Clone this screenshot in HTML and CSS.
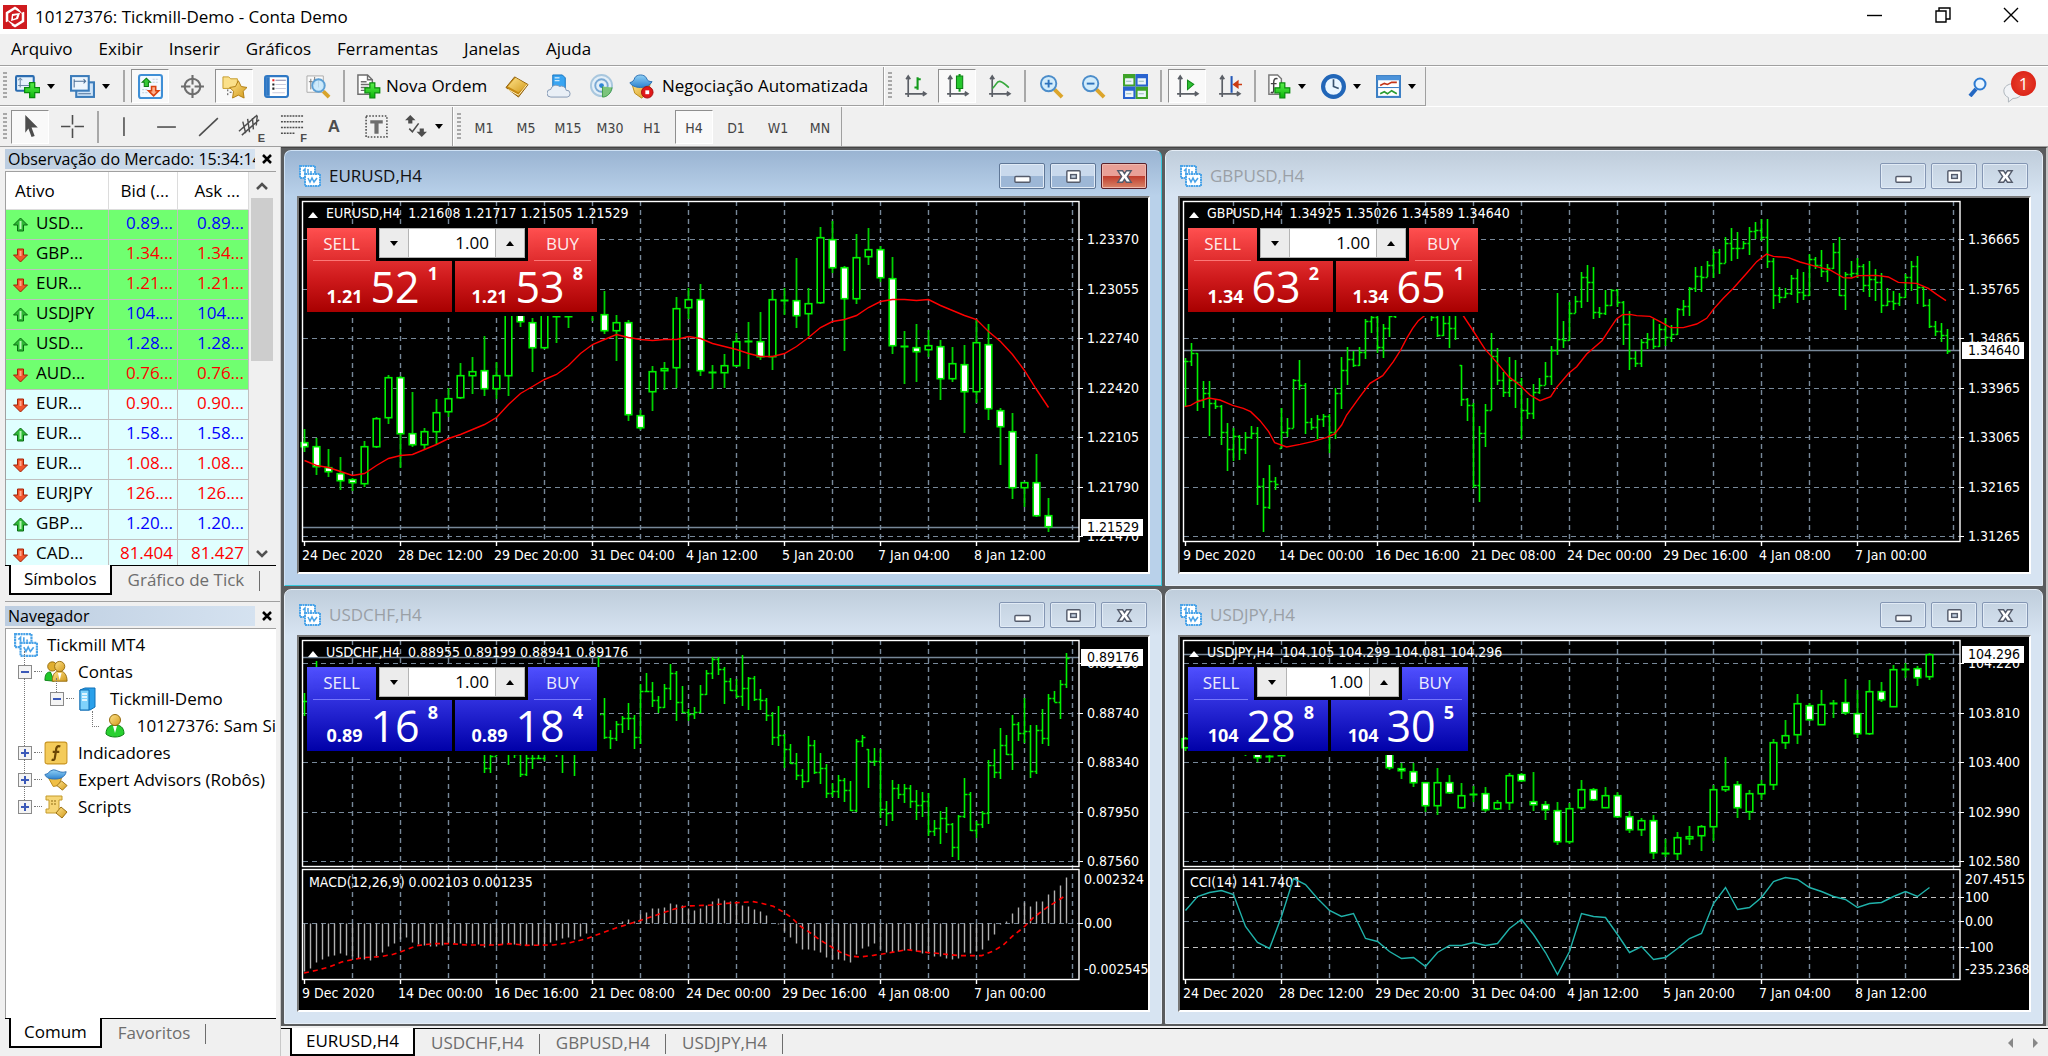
FILE: index.html
```html
<!DOCTYPE html>
<html lang="pt">
<head>
<meta charset="utf-8">
<meta name="viewport" content="width=device-width, initial-scale=1">
<title>10127376: Tickmill-Demo - Conta Demo</title>
<link rel="stylesheet" href="styles.css">
</head>
<body>
<svg class="sprite" aria-hidden="true">
  <defs>
    <linearGradient id="gold" x1="0" y1="0" x2="1" y2="1"><stop offset="0" stop-color="#ffe38a"/><stop offset="1" stop-color="#d29a1c"/></linearGradient>
    <linearGradient id="blue" x1="0" y1="0" x2="0" y2="1"><stop offset="0" stop-color="#8fd0f5"/><stop offset="1" stop-color="#2f83cf"/></linearGradient>
    <linearGradient id="plusg" x1="0" y1="0" x2="0" y2="1"><stop offset="0" stop-color="#5cf04c"/><stop offset="1" stop-color="#0cb40c"/></linearGradient>
  </defs>
  <symbol id="plus" viewBox="0 0 14 14"><path d="M5 1h4v4h4v4H9v4H5V9H1V5h4z" fill="url(#plusg)" stroke="#078a0b"/></symbol>
  <symbol id="i-newchart" viewBox="0 0 24 24"><rect x="1" y="2" width="17" height="14" rx="1" fill="#e6f2fc" stroke="#2b6cb0" stroke-width="2"/><path d="M5 5v8M3 11h12M13 9l2 2-2 2M3 6l2-2 2 2" stroke="#6b88a8" fill="none"/><use href="#plus" x="8" y="7" width="17" height="17"/></symbol>
  <symbol id="i-profiles" viewBox="0 0 24 24"><rect x="6" y="8" width="17" height="14" fill="#cfe4f8" stroke="#3c7cba" stroke-width="2"/><rect x="1" y="2" width="17" height="14" fill="#eef6fd" stroke="#3c7cba" stroke-width="2"/><path d="M4 5v8M4 7h11M13 5l2 2-2 2M8 19h12" stroke="#4d6f96" fill="none"/></symbol>
  <symbol id="i-market" viewBox="0 0 24 24"><rect x="1" y="1" width="22" height="22" rx="2" fill="#f4faff" stroke="#3f8fd6" stroke-width="2"/><path d="M14 5h6M14 8h6M4 15h6M4 18h6" stroke="#c2cfdb" stroke-dasharray="2 1"/><path d="M8 4l4 4h-2v4H6V8H4z" fill="#35c935" stroke="#0d7d14"/><path d="M15 21l-5-5h3v-4h4v4h3z" fill="#ffb08c" stroke="#d9420f" stroke-width="1.500"/></symbol>
  <symbol id="i-data" viewBox="0 0 24 24"><circle cx="12" cy="12" r="7.500" fill="none" stroke="#6d6d6d" stroke-width="2"/><path d="M12 1v9M12 14v9M1 12h9M14 12h9" stroke="#6d6d6d" stroke-width="2"/></symbol>
  <symbol id="i-nav" viewBox="0 0 26 26"><path d="M1 3h6l2 2h7v10H1z" fill="#fbe08a" stroke="#c49a2a"/><path d="M6 16v8M8 19h4" stroke="#444" stroke-dasharray="2 2"/><path d="M17 7l3 6 6 1-4 4 1 7-6-3-6 3 1-7-4-4 6-1z" fill="url(#gold)" stroke="#b07d12"/></symbol>
  <symbol id="i-terminal" viewBox="0 0 24 24"><rect x="1" y="2" width="22" height="20" rx="2" fill="#fff" stroke="#2f78c4" stroke-width="2"/><path d="M2 3h3.500v18H2z" fill="#2f78c4"/><path d="M8 6h2" stroke="#e22" stroke-width="2"/><path d="M11 6h10" stroke="#88a"/><path d="M8 10h2M8 14h2" stroke="#222" stroke-width="2"/><path d="M11 10h10M11 14h10M8 18h12" stroke="#ccd"/></symbol>
  <symbol id="i-tester" viewBox="0 0 26 26"><path d="M1 2h17v17H1z" fill="#fafafa" stroke="#aaa"/><path d="M5 5v11M9 3v8M13 5v9M3 8h4M8 6h4" stroke="#777"/><circle cx="13" cy="12" r="6.500" fill="#c3e6fb" fill-opacity=".85" stroke="#5c9fd4" stroke-width="2"/><path d="M18 18l6 6" stroke="#d8a32a" stroke-width="4"/></symbol>
  <symbol id="i-order" viewBox="0 0 26 26"><path d="M2 1h10l5 5v15H2z" fill="#fff" stroke="#6d6d6d" stroke-width="1.500"/><path d="M12 1v5h5M5 8h6M5 11h9M5 14h8M5 17h4" stroke="#6d6d6d" fill="none" stroke-width="1.500"/><use href="#plus" x="8" y="8" width="18" height="18"/></symbol>
  <symbol id="i-meta" viewBox="0 0 26 26"><path d="M1 14L10 3l14 8-10 13z" fill="#c78a12" stroke="#8d5d08"/><path d="M3 13l8-9 12 7-9 8z" fill="url(#gold)"/><path d="M3 16l11 6 9-11" fill="none" stroke="#fff1c2"/></symbol>
  <symbol id="i-mql" viewBox="0 0 26 26"><path d="M6 1h10l3 3v12H6z" fill="#39a5f2" stroke="#1573be"/><path d="M8 4h5M8 7h5" stroke="#fff"/><path d="M4 24a4 4 0 010-8 5.500 5.500 0 019-3 5 5 0 017 4 3.500 3.500 0 011 7z" fill="#e9eff6" stroke="#8397b3"/></symbol>
  <symbol id="i-signal" viewBox="0 0 26 26"><circle cx="13" cy="12" r="11" fill="#e3eff8" stroke="#a9c7de" stroke-width="2"/><circle cx="13" cy="12" r="6.500" fill="none" stroke="#7aa9d4" stroke-width="2"/><circle cx="13" cy="12" r="2.500" fill="#2f86d6"/><path d="M14 13v11c5 0 9-4 10-10" fill="#7cc47c" stroke="#3f9a48"/></symbol>
  <symbol id="i-robot" viewBox="0 0 26 26"><path d="M3 10h19l-2 10-7 5-7-5z" fill="url(#gold)" stroke="#b88715"/><path d="M1 9c3-1 4-2 5-5 2-4 10-4 12 0 1 3 3 4 6 4-2 4-7 6-12 6S2 12 1 9z" fill="url(#blue)" stroke="#2c70b3"/><circle cx="19" cy="19" r="6" fill="#e01818" stroke="#a80c0c"/><path d="M17 17h4v4h-4z" fill="#fff"/></symbol>
  <symbol id="axes" viewBox="0 0 24 24"><path d="M5 2v20M2 19h20M3 5l2-3 2 3M19 17l3 2-3 2" fill="none" stroke="#5b5f66" stroke-width="1.600"/></symbol>
  <symbol id="i-bars" viewBox="0 0 24 24"><use href="#axes"/><path d="M14 3v12M11 13h3M14 5h3" stroke="#129a1b" stroke-width="2"/></symbol>
  <symbol id="i-candles" viewBox="0 0 24 24"><use href="#axes"/><path d="M14 0v17" stroke="#129a1b" stroke-width="2"/><path d="M11 2h6v12h-6z" fill="#25c72d" stroke="#0c7f14"/></symbol>
  <symbol id="i-line" viewBox="0 0 24 24"><use href="#axes"/><path d="M5 14c4-3 4-7 7-7 3 0 5 3 9 6" fill="none" stroke="#36a83c" stroke-width="1.600"/></symbol>
  <symbol id="i-zoomin" viewBox="0 0 26 26"><path d="M16 16l8 8" stroke="#dca52b" stroke-width="4"/><circle cx="10" cy="10" r="8" fill="#d2ecfb" stroke="#4c8dca" stroke-width="2"/><path d="M10 6v8M6 10h8" stroke="#2e73bd" stroke-width="2"/></symbol>
  <symbol id="i-zoomout" viewBox="0 0 26 26"><path d="M16 16l8 8" stroke="#dca52b" stroke-width="4"/><circle cx="10" cy="10" r="8" fill="#d2ecfb" stroke="#4c8dca" stroke-width="2"/><path d="M6 10h8" stroke="#2e73bd" stroke-width="2"/></symbol>
  <symbol id="i-tile" viewBox="0 0 24 24"><path d="M0 0h12v12H0zM12 12h12v12H12z" fill="#3fa329"/><path d="M12 0h12v12H12zM0 12h12v12H0z" fill="#2963cf"/><path d="M2 4h8v6H2zM14 4h8v6h-8zM2 16h8v6H2zM14 16h8v6h-8z" fill="#eef6fb"/><path d="M3 7h5M15 7h5M3 19h5M15 19h5" stroke="#9bb"/></symbol>
  <symbol id="i-scroll" viewBox="0 0 24 24"><use href="#axes"/><path d="M12 6l6 4-6 5z" fill="#2fc234" stroke="#128a19"/></symbol>
  <symbol id="i-shift" viewBox="0 0 24 24"><use href="#axes"/><path d="M14 2v16" stroke="#2458b8" stroke-width="2"/><path d="M24 10h-6M20 7l-4 3 4 3z" stroke="#cc3b12" stroke-width="1.500" fill="#cc3b12"/></symbol>
  <symbol id="i-indic" viewBox="0 0 26 26"><path d="M3 1h9l4 4v16H3z" fill="#fff" stroke="#777" stroke-width="1.500"/><path d="M12 5c-3-1-4 1-4 4v8c0 2-1 3-3 2M5 10h6" fill="none" stroke="#444" stroke-width="1.500"/><use href="#plus" x="8" y="8" width="18" height="18"/></symbol>
  <symbol id="i-clock" viewBox="0 0 24 24"><circle cx="12" cy="12" r="10" fill="#eaf6ff" stroke="#2166b8" stroke-width="4"/><path d="M12 5v7l5 2" fill="none" stroke="#39536e" stroke-width="1.600"/></symbol>
  <symbol id="i-template" viewBox="0 0 24 24"><rect x="1" y="2" width="22" height="20" fill="#fff" stroke="#3c7fc4" stroke-width="2"/><path d="M1 2h22v4H1z" fill="#4c93da"/><path d="M2 13h20" stroke="#3c7fc4"/><path d="M4 11l4-2 3 1 4-2 5 0" fill="none" stroke="#c3361a" stroke-width="1.600"/><path d="M4 19l4-2 3 2 4-3 5 3" fill="none" stroke="#2c9d34" stroke-width="1.600"/></symbol>
  <symbol id="i-search" viewBox="0 0 20 20"><circle cx="12" cy="7" r="5.500" fill="#e9f5ff" stroke="#2d7bd2" stroke-width="2"/><path d="M8 12l-6 7" stroke="#2468c2" stroke-width="4"/></symbol>
  <symbol id="i-cursor" viewBox="0 0 24 24"><path d="M7 1l12 12h-6l3 8-3 1-3-8-3 4z" fill="#4d4d4d"/></symbol>
  <symbol id="i-cross" viewBox="0 0 24 24"><path d="M12 1v9M12 14v9M1 12h9M14 12h9" stroke="#4d4d4d" stroke-width="1.500"/></symbol>
  <symbol id="i-vline" viewBox="0 0 24 24"><path d="M11.500 3v18" stroke="#4d4d4d" stroke-width="1.500"/></symbol>
  <symbol id="i-hline" viewBox="0 0 24 24"><path d="M3 12.500h18" stroke="#4d4d4d" stroke-width="1.500"/></symbol>
  <symbol id="i-trend" viewBox="0 0 24 24"><path d="M3 21L21 4" stroke="#4d4d4d" stroke-width="1.500"/></symbol>
  <symbol id="i-channel" viewBox="0 0 26 26"><path d="M1 18L20 1M4 22L22 6M5 8l3 12M10 5l2 14M15 4l1 12M20 2l-1 10" stroke="#4d4d4d" stroke-width="1.500"/></symbol>
  <symbol id="i-fibo" viewBox="0 0 26 26"><path d="M1 2h24M1 8h24M1 14h24M1 20h15" stroke="#4d4d4d" stroke-width="1.500" stroke-dasharray="2 1"/></symbol>
  <symbol id="i-label" viewBox="0 0 24 24"><rect x="2" y="2" width="20" height="20" fill="none" stroke="#4d4d4d" stroke-width="1.500" stroke-dasharray="1.500 1.500"/><path d="M6 6h12v3h-4v10h-4V9H6z" fill="#6d6d6d"/></symbol>
  <symbol id="i-arrows" viewBox="0 0 24 24"><path d="M7 1l5 5H9v3H5V6H2zM18 22l-5-5h3v-3h4v3h3z" fill="#4d4d4d"/><path d="M6 14l3 3 6-8" fill="none" stroke="#4d4d4d" stroke-width="1.500"/></symbol>
  <symbol id="i-chart" viewBox="0 0 22 22"><path d="M1 1h15v12H1z" fill="#fff" stroke="#4aa3e8" stroke-width="2" stroke-dasharray="2 .5"/><path d="M4 6l2-2v4M9 4v4M12 6v2" stroke="#4aa3e8" fill="none" stroke-width="1.500"/><path d="M6 9h15v12H6z" fill="#fff" stroke="#4aa3e8" stroke-width="2" stroke-dasharray="2 .5"/><path d="M9 13l2 4 2-4 2 4 3-4" fill="none" stroke="#4aa3e8" stroke-width="1.500"/></symbol>
  <symbol id="up" viewBox="0 0 16 16"><path d="M8 1l7 7h-4v6H5V8H1z" fill="#2fb936" stroke="#0a6b12"/><path d="M8 4v8" stroke="#b9f5b5" stroke-width="2"/></symbol>
  <symbol id="down" viewBox="0 0 16 16"><path d="M8 15l7-7h-4V2H5v6H1z" fill="#f0552c" stroke="#a32408"/><path d="M8 4v5" stroke="#ffa98a" stroke-width="2"/></symbol>
  <symbol id="w-min" viewBox="0 0 20 20"><rect x="2" y="10" width="16" height="6" rx="1" fill="#fff" stroke="#545b6b" stroke-width="1.500"/></symbol>
  <symbol id="w-max" viewBox="0 0 20 20"><rect x="3" y="4" width="14" height="12" rx="1" fill="#fff" stroke="#545b6b" stroke-width="1.500"/><rect x="7" y="8" width="6" height="4" fill="#c5d2e2" stroke="#545b6b" stroke-width="1.500"/></symbol>
  <symbol id="w-close" viewBox="0 0 20 20"><path d="M3 4h5l2 3 2-3h5l-4 6 4 6h-5l-2-3-2 3H3l4-6z" fill="#fff" stroke="#545b6b" stroke-width="1.500"/></symbol>
  <symbol id="n-people" viewBox="0 0 26 24"><path d="M1 21c0-8 3-9 6-9l4 10z" fill="#20c72a" stroke="#0b8213"/><circle cx="9" cy="6" r="5" fill="#e0ae2f" stroke="#946a0c"/><path d="M9 22c0-9 4-11 8-11s8 3 8 11z" fill="url(#gold)" stroke="#946a0c"/><circle cx="17" cy="6" r="5.500" fill="url(#gold)" stroke="#946a0c"/><path d="M15 13l2 8 2-8z" fill="#fff"/></symbol>
  <symbol id="n-server" viewBox="0 0 20 24"><path d="M2 3l5-2h10v19l-5 3H2z" fill="#2aa0ea" stroke="#0f6fb5"/><path d="M2 3h9v20H2z" fill="#7fd2fb" stroke="#0f6fb5"/><path d="M4 7h5M4 10h5M4 13h5" stroke="#fff" stroke-width="1.500"/></symbol>
  <symbol id="n-user" viewBox="0 0 22 24"><path d="M2 20c0-7 4-9 9-9s9 2 9 9c-4 4-14 4-18 0z" fill="#28d030" stroke="#0b8213"/><circle cx="11" cy="6" r="5.500" fill="url(#gold)" stroke="#946a0c"/><path d="M9 12l2 7 2-7z" fill="#fff"/></symbol>
  <symbol id="n-func" viewBox="0 0 22 22"><rect x="1" y="1" width="20" height="20" rx="2" fill="#f4cb5a" stroke="#c99522"/><path d="M15 5c-3-1-4 1-4 4l-1 6c0 2-1 3-3 2M8 10h6" fill="none" stroke="#6b4605" stroke-width="2"/></symbol>
  <symbol id="n-expert" viewBox="0 0 26 24"><path d="M5 10h14l-3 8-6 1z" fill="#f0bf45" stroke="#b88715"/><path d="M1 6c4 0 4-4 9-5 5 0 7 4 14 2-1 6-7 8-12 8S2 10 1 6z" fill="url(#blue)" stroke="#2c70b3"/><path d="M19 13l6 5-5 5-6-5z" fill="url(#gold)" stroke="#9c7010"/></symbol>
  <symbol id="n-script" viewBox="0 0 24 24"><path d="M2 1h16v4h-3v9h3v4H2v-4h3V5H2z" fill="#f6d676" stroke="#c49a2a"/><path d="M7 6h6M7 9h6" stroke="#8d6a12" stroke-dasharray="2 1"/><path d="M17 12l6 5-5 6-6-5z" fill="url(#gold)" stroke="#9c7010"/></symbol>
</svg>

<div class="app">
  <header class="titlebar">
    <svg class="logo" viewBox="0 0 24 24"><path d="M0 0h24v24H0z" fill="#cf1b1f"/><path d="M12 3l8 5v8l-8 5-8-5V8z" fill="none" stroke="#fff" stroke-width="2.500"/><path d="M9 9l8-1-2 6-7 2z" fill="#fff"/><path d="M10 11l4-1-1 3-3 1z" fill="#cf1b1f"/><path d="M16 2l4 5M4 17l4 4" stroke="#cf1b1f" stroke-width="3"/></svg>
    <h1>10127376: Tickmill-Demo - Conta Demo</h1>
    <div class="sysbtns">
      <button aria-label="Minimizar"><svg viewBox="0 0 16 16"><path d="M0 8.500h15" stroke="#000" stroke-width="1.400"/></svg></button>
      <button aria-label="Restaurar"><svg viewBox="0 0 16 16"><path d="M1 4h10v11H1zM4 4V1h11v11h-4" fill="none" stroke="#000" stroke-width="1.400"/></svg></button>
      <button aria-label="Fechar"><svg viewBox="0 0 16 16"><path d="M1 1l14 14M15 1L1 15" stroke="#000" stroke-width="1.400"/></svg></button>
    </div>
  </header>
  <nav class="menu">
    <a href="#">Arquivo</a><a href="#">Exibir</a><a href="#">Inserir</a><a href="#">Gráficos</a><a href="#">Ferramentas</a><a href="#">Janelas</a><a href="#">Ajuda</a>
  </nav>

  <div class="bar">
    <div class="group">
      <i class="grip"></i>
      <button class="dd" aria-label="Novo gráfico"><svg><use href="#i-newchart"/></svg></button>
      <button class="dd" aria-label="Perfis"><svg><use href="#i-profiles"/></svg></button>
      <i class="sep"></i>
      <button class="on" aria-label="Observação do mercado"><svg><use href="#i-market"/></svg></button>
      <button aria-label="Janela de dados"><svg><use href="#i-data"/></svg></button>
      <button class="on" aria-label="Navegador"><svg><use href="#i-nav"/></svg></button>
      <button aria-label="Terminal"><svg><use href="#i-terminal"/></svg></button>
      <button aria-label="Testador"><svg><use href="#i-tester"/></svg></button>
      <i class="sep"></i>
      <button class="wide order"><svg><use href="#i-order"/></svg>Nova Ordem</button>
      <button aria-label="MetaEditor"><svg><use href="#i-meta"/></svg></button>
      <button aria-label="MQL5"><svg><use href="#i-mql"/></svg></button>
      <button aria-label="Sinais"><svg><use href="#i-signal"/></svg></button>
      <button class="wide auto"><svg><use href="#i-robot"/></svg>Negociação Automatizada</button>
    </div>
    <div class="group">
      <i class="grip"></i>
      <button aria-label="Barras"><svg><use href="#i-bars"/></svg></button>
      <button class="on" aria-label="Velas"><svg><use href="#i-candles"/></svg></button>
      <button aria-label="Linha"><svg><use href="#i-line"/></svg></button>
      <i class="sep"></i>
      <button aria-label="Ampliar"><svg><use href="#i-zoomin"/></svg></button>
      <button aria-label="Reduzir"><svg><use href="#i-zoomout"/></svg></button>
      <button aria-label="Lado a lado"><svg><use href="#i-tile"/></svg></button>
      <i class="sep"></i>
      <button class="on" aria-label="Rolagem automática"><svg><use href="#i-scroll"/></svg></button>
      <button aria-label="Deslocar gráfico"><svg><use href="#i-shift"/></svg></button>
      <i class="sep"></i>
      <button class="dd" aria-label="Indicadores"><svg><use href="#i-indic"/></svg></button>
      <button class="dd" aria-label="Períodos"><svg><use href="#i-clock"/></svg></button>
      <button class="dd" aria-label="Modelos"><svg><use href="#i-template"/></svg></button>
    </div>
    <div class="right">
      <button aria-label="Buscar"><svg class="find"><use href="#i-search"/></svg></button>
      <button class="chat" aria-label="Mensagens"><svg viewBox="0 0 24 24"><path d="M2 11c0-5 5-8 10-8s10 3 10 8-4 8-10 8l-5 4v-5c-3-1-5-4-5-7z" fill="#f2f4f7" stroke="#a9b0b8"/></svg><span class="count">1</span></button>
    </div>
  </div>
  <div class="bar draw">
    <div class="group">
      <i class="grip"></i>
      <button class="on" aria-label="Cursor"><svg><use href="#i-cursor"/></svg></button>
      <button aria-label="Cruz"><svg><use href="#i-cross"/></svg></button>
      <i class="sep"></i>
      <button aria-label="Linha vertical"><svg><use href="#i-vline"/></svg></button>
      <button aria-label="Linha horizontal"><svg><use href="#i-hline"/></svg></button>
      <button aria-label="Linha de tendência"><svg><use href="#i-trend"/></svg></button>
      <button class="tag"><svg><use href="#i-channel"/></svg><b>E</b></button>
      <button class="tag"><svg><use href="#i-fibo"/></svg><b>F</b></button>
      <button class="letter">A</button>
      <button aria-label="Rótulo"><svg><use href="#i-label"/></svg></button>
      <button class="dd" aria-label="Setas"><svg><use href="#i-arrows"/></svg></button>
    </div>
    <div class="group tf">
      <i class="grip"></i>
      <button>M1</button><button>M5</button><button>M15</button><button>M30</button><button>H1</button><button class="on">H4</button><button>D1</button><button>W1</button><button>MN</button>
    </div>
  </div>

  <main class="work">
    <aside class="side">
      <section class="panel">
        <header class="cap"><h2>Observação do Mercado: 15:34:14</h2><button aria-label="Fechar painel"><svg viewBox="0 0 10 10"><path d="M1 1l8 8M9 1L1 9" stroke="#000" stroke-width="2.500"/></svg></button></header>
        <div class="market">
          <table>
            <colgroup><col class="c1"><col class="c2"><col class="c3"></colgroup>
            <thead><tr><th>Ativo</th><th>Bid (...</th><th>Ask ...</th></tr></thead>
            <tbody>
              <tr class="hot u"><td><svg><use href="#up"/></svg>USD...</td><td>0.89...</td><td>0.89...</td></tr>
              <tr class="hot d"><td><svg><use href="#down"/></svg>GBP...</td><td>1.34...</td><td>1.34...</td></tr>
              <tr class="hot d"><td><svg><use href="#down"/></svg>EUR...</td><td>1.21...</td><td>1.21...</td></tr>
              <tr class="hot u"><td><svg><use href="#up"/></svg>USDJPY</td><td>104....</td><td>104....</td></tr>
              <tr class="hot u"><td><svg><use href="#up"/></svg>USD...</td><td>1.28...</td><td>1.28...</td></tr>
              <tr class="hot d"><td><svg><use href="#down"/></svg>AUD...</td><td>0.76...</td><td>0.76...</td></tr>
              <tr class="d"><td><svg><use href="#down"/></svg>EUR...</td><td>0.90...</td><td>0.90...</td></tr>
              <tr class="u"><td><svg><use href="#up"/></svg>EUR...</td><td>1.58...</td><td>1.58...</td></tr>
              <tr class="d"><td><svg><use href="#down"/></svg>EUR...</td><td>1.08...</td><td>1.08...</td></tr>
              <tr class="d"><td><svg><use href="#down"/></svg>EURJPY</td><td>126....</td><td>126....</td></tr>
              <tr class="u"><td><svg><use href="#up"/></svg>GBP...</td><td>1.20...</td><td>1.20...</td></tr>
              <tr class="d"><td><svg><use href="#down"/></svg>CAD...</td><td>81.404</td><td>81.427</td></tr>
            </tbody>
          </table>
          <div class="scroll"><svg viewBox="0 0 12 8"><path d="M1 7l5-5 5 5" fill="none" stroke="#505050" stroke-width="2.500"/></svg><i></i><svg viewBox="0 0 12 8"><path d="M1 1l5 5 5-5" fill="none" stroke="#505050" stroke-width="2.500"/></svg></div>
        </div>
        <div class="tabs"><button class="cur">Símbolos</button><button>Gráfico de Tick</button></div>
      </section>
      <section class="panel grow">
        <header class="cap"><h2>Navegador</h2><button aria-label="Fechar painel"><svg viewBox="0 0 10 10"><path d="M1 1l8 8M9 1L1 9" stroke="#000" stroke-width="2.500"/></svg></button></header>
        <ul class="tree">
          <li><svg><use href="#i-chart"/></svg>Tickmill MT4</li>
          <li class="l1"><i class="box"></i><i class="dots"></i><svg><use href="#n-people"/></svg>Contas</li>
          <li class="l2"><i class="box"></i><i class="dots"></i><svg><use href="#n-server"/></svg>Tickmill-Demo</li>
          <li class="l3"><i class="elbow"></i><svg><use href="#n-user"/></svg>10127376: Sam Si</li>
          <li class="l1"><i class="box more"></i><i class="dots"></i><svg><use href="#n-func"/></svg>Indicadores</li>
          <li class="l1"><i class="box more"></i><i class="dots"></i><svg><use href="#n-expert"/></svg>Expert Advisors (Robôs)</li>
          <li class="l1"><i class="box more"></i><i class="dots"></i><svg><use href="#n-script"/></svg>Scripts</li>
        </ul>
        <div class="tabs"><button class="cur">Comum</button><button>Favoritos</button></div>
      </section>
    </aside>

    <section class="desk">
      <div class="mdi">
        <article class="win active">
          <header><svg><use href="#i-chart"/></svg><h3>EURUSD,H4</h3><button aria-label="Minimizar"><svg><use href="#w-min"/></svg></button><button aria-label="Maximizar"><svg><use href="#w-max"/></svg></button><button class="x" aria-label="Fechar"><svg><use href="#w-close"/></svg></button></header>
          <div class="chart"><div class="plot" data-chart="eurusd"></div>
            <div class="trade red"><button class="sell"><span>SELL</span><p><small>1.21</small><big>52</big><sup>1</sup></p></button><button class="buy"><span>BUY</span><p><small>1.21</small><big>53</big><sup>8</sup></p></button><div class="vol"><button class="dn" aria-label="Menos"></button><input value="1.00" aria-label="Volume"><button class="upb" aria-label="Mais"></button></div></div></div>
        </article>
        <article class="win">
          <header><svg><use href="#i-chart"/></svg><h3>GBPUSD,H4</h3><button aria-label="Minimizar"><svg><use href="#w-min"/></svg></button><button aria-label="Maximizar"><svg><use href="#w-max"/></svg></button><button class="x" aria-label="Fechar"><svg><use href="#w-close"/></svg></button></header>
          <div class="chart"><div class="plot" data-chart="gbpusd"></div>
            <div class="trade red"><button class="sell"><span>SELL</span><p><small>1.34</small><big>63</big><sup>2</sup></p></button><button class="buy"><span>BUY</span><p><small>1.34</small><big>65</big><sup>1</sup></p></button><div class="vol"><button class="dn" aria-label="Menos"></button><input value="1.00" aria-label="Volume"><button class="upb" aria-label="Mais"></button></div></div></div>
        </article>
        <article class="win">
          <header><svg><use href="#i-chart"/></svg><h3>USDCHF,H4</h3><button aria-label="Minimizar"><svg><use href="#w-min"/></svg></button><button aria-label="Maximizar"><svg><use href="#w-max"/></svg></button><button class="x" aria-label="Fechar"><svg><use href="#w-close"/></svg></button></header>
          <div class="chart"><div class="plot" data-chart="usdchf"></div>
            <div class="trade blue"><button class="sell"><span>SELL</span><p><small>0.89</small><big>16</big><sup>8</sup></p></button><button class="buy"><span>BUY</span><p><small>0.89</small><big>18</big><sup>4</sup></p></button><div class="vol"><button class="dn" aria-label="Menos"></button><input value="1.00" aria-label="Volume"><button class="upb" aria-label="Mais"></button></div></div></div>
        </article>
        <article class="win">
          <header><svg><use href="#i-chart"/></svg><h3>USDJPY,H4</h3><button aria-label="Minimizar"><svg><use href="#w-min"/></svg></button><button aria-label="Maximizar"><svg><use href="#w-max"/></svg></button><button class="x" aria-label="Fechar"><svg><use href="#w-close"/></svg></button></header>
          <div class="chart"><div class="plot" data-chart="usdjpy"></div>
            <div class="trade blue narrow"><button class="sell"><span>SELL</span><p><small>104</small><big>28</big><sup>8</sup></p></button><button class="buy"><span>BUY</span><p><small>104</small><big>30</big><sup>5</sup></p></button><div class="vol"><button class="dn" aria-label="Menos"></button><input value="1.00" aria-label="Volume"><button class="upb" aria-label="Mais"></button></div></div></div>
        </article>
      </div>
      <div class="tabs desktabs"><button class="cur">EURUSD,H4</button><button>USDCHF,H4</button><button>GBPUSD,H4</button><button>USDJPY,H4</button><span class="pager"><i></i><i></i></span></div>
    </section>
  </main>
</div>
<script src="script.js"></script>
</body>
</html>
```
FILE: styles.css
```css
* { box-sizing: border-box; margin: 0; padding: 0; }
body { font: 17px/20px "Open Sans", "Noto Sans", sans-serif; color: #000; background: #f0f0f0; }
h1, h2, h3 { font-size: inherit; font-weight: 400; }
button { font: inherit; color: inherit; background: none; border: 0; }
a { color: inherit; text-decoration: none; }
.sprite { position: absolute; width: 0; height: 0; }
.app { display: flex; flex-direction: column; height: 100vh; min-width: 1460px; min-height: 900px; overflow: hidden; }

.titlebar { display: flex; align-items: center; height: 34px; flex: none; background: #fff; padding: 0 3px; gap: 8px; }
.titlebar h1 { flex: 1; }
.logo { width: 24px; height: 24px; }
.sysbtns { display: flex; }
.sysbtns button { width: 68px; height: 30px; }
.sysbtns svg { width: 16px; height: 16px; }
.menu { display: flex; flex: none; height: 32px; padding: 5px 11px; gap: 26px; border-bottom: 1px solid #a0a0a0; }

.bar { display: flex; flex: none; height: 40px; border-top: 1px solid #fff; }
.group { display: flex; align-items: center; gap: 4px; padding: 0 6px 0 3px; border-right: 1px solid #a0a0a0; border-bottom: 1px solid #a0a0a0; }
.bar .group + .group { padding: 0 2px 0 3px; border-left: 1px solid #fff; }
.draw .group { border-bottom: 0; padding-right: 2px; }
.draw { height: 41px; border-bottom: 1px solid #a0a0a0; }
.grip { width: 4px; height: 28px; background: repeating-linear-gradient(#a8a8a8 0 2px, #f0f0f0 2px 4px); }
.sep { width: 2px; height: 32px; margin: 0 2px; background: #a8a8a8; }
.group button { display: flex; align-items: center; justify-content: center; width: 38px; height: 34px; }
.group svg { width: 25px; height: 25px; flex: none; }
.group .on { border: 1px solid; border-color: #8f8f8f #fff #fff #8f8f8f; background: #f9f9f9; }
.group .dd { width: 51px; justify-content: flex-start; padding-left: 4px; gap: 7px; }
.group .dd::after { content: ""; border: 4px solid transparent; border-top: 5px solid #000; border-bottom: 0; }
.group .wide { justify-content: flex-start; gap: 5px; padding-left: 5px; white-space: nowrap; }
.group .order { width: 143px; }
.group .auto { width: 253px; gap: 8px; }
.letter { color: #4d4d4d; font: 700 17px/20px "Liberation Sans", sans-serif; }
.tag { position: relative; }
.tag b { position: absolute; right: 4px; bottom: 0; color: #4d4d4d; font: 700 11px/12px "Liberation Sans", sans-serif; }
.tf button { font: 14px/16px "DejaVu Sans Condensed", "Noto Sans", sans-serif; color: #444; padding-top: 2px; }
.right { display: flex; align-items: center; gap: 14px; margin-left: auto; padding-right: 12px; }
.right svg { display: block; width: 20px; height: 20px; }
.chat { position: relative; width: 34px; height: 32px; }
.chat .count { line-height: 25px; }
.chat svg { position: absolute; left: 0; bottom: 0; width: 22px; height: 22px; }
.count { position: absolute; right: 0; top: 0; width: 25px; height: 25px; border-radius: 50%; background: radial-gradient(#e8432f, #d8190f); color: #fff; }

.work { display: flex; flex: 1; min-height: 0; }
.side { display: flex; flex-direction: column; gap: 4px; width: 281px; padding: 2px 0 0 5px; border-right: 1px solid #c8c8c8; }
.panel { display: flex; flex-direction: column; padding-right: 4px; }
.panel + .panel { border-top: 1px solid #a0a0a0; padding-top: 4px; }
.grow { flex: 1; min-height: 0; }
.cap { display: flex; align-items: center; justify-content: space-between; height: 20px; margin-bottom: 2px; padding-right: 4px; }
.cap h2 { width: 250px; padding-left: 3px; overflow: hidden; white-space: nowrap; font-size: 16px; line-height: 20px; background: linear-gradient(90deg, #bccde0, #d5e2f0); }
.cap svg { display: block; width: 10px; height: 10px; }
.market { display: flex; height: 394px; overflow: hidden; border: solid #a0a0a0; border-width: 1px 0 0 1px; background: #fff; }
table { width: 243px; flex: none; table-layout: fixed; border-collapse: separate; border-spacing: 0; }
.c1 { width: 103px; } .c2 { width: 69px; } .c3 { width: 71px; }
th { height: 38px; font-weight: 400; text-align: right; padding-right: 8px; border-right: 1px solid #dcdcdc; border-bottom: 1px solid #dcdcdc; }
th:first-child { text-align: left; padding-left: 9px; }
td { height: 30px; line-height: 26px; padding: 0 4px 3px 0; text-align: right; white-space: nowrap; overflow: hidden; background: #e0ffff; border-right: 1px solid #c0c0c0; border-bottom: 1px solid #c0c0c0; }
td:first-child { text-align: left; padding-left: 6px; color: #000; }
td svg { width: 17px; height: 16px; margin-right: 7px; vertical-align: -4px; }
.hot td { background: #70ff70; }
.u { color: #0000ff; }
.d { color: #ff0000; }
.scroll { display: flex; flex: 1; flex-direction: column; align-items: center; background: #f0f0f0; padding: 10px 3px 7px 1px; }
.scroll svg { width: 12px; height: 8px; }
.scroll i { width: 22px; height: 163px; margin: 8px 0 auto; background: #cdcdcd; }

.tabs { display: flex; flex: none; height: 32px; padding-left: 4px; border-top: 1px solid #000; color: #6d6d6d; }
.tabs button { position: relative; height: 28px; padding: 0 16px 0; white-space: nowrap; }
.tabs button:not(.cur)::after { content: ""; position: absolute; right: 0; top: 5px; height: 20px; border-right: 1px solid #6d6d6d; }
.tabs .cur { margin-top: -1px; height: 30px; padding: 0 13px; background: #fff; color: #000; border: solid #000; border-width: 0 2px 2px; }
.grow .tabs { height: 38px; }
.tree { flex: 1; min-height: 0; list-style: none; padding: 2px 0 0 8px; border: solid #a0a0a0; border-width: 1px 0 0 1px; background: #fff; overflow: hidden; }
.tree li { display: flex; align-items: center; height: 27px; gap: 9px; white-space: nowrap; }
.tree svg { width: 24px; height: 24px; flex: none; }
.tree .l1, .tree .l2 { gap: 0; padding-left: 4px; }
.tree .l2 { padding-left: 36px; }
.tree .l1 svg, .tree .l2 svg { margin-right: 10px; }
.tree .l3 { gap: 0; padding-left: 76px; }
.tree .l3 svg { margin-right: 10px; }
.box { position: relative; width: 14px; height: 14px; border: 1px solid #8a8a8a; background: linear-gradient(#3b59b8, #3b59b8) center/8px 2px no-repeat, #f4f4f4; }
.box.more { background: linear-gradient(#3b59b8, #3b59b8) center/8px 2px no-repeat, linear-gradient(#3b59b8, #3b59b8) center/2px 8px no-repeat, #f4f4f4; }
.l1 .box::before, .l2 .box::before { content: ""; position: absolute; left: 5px; bottom: 13px; height: 14px; border-left: 1px dotted #777; }
.l3 + .l1 .box::before { height: 68px; }
.dots { width: 8px; margin: 0 2px; border-top: 1px dotted #777; }
.elbow { width: 17px; height: 16px; margin: -14px 4px 0 2px; border: dotted #777; border-width: 0 0 1px 1px; }

.desk { display: flex; flex: 1; min-width: 0; flex-direction: column; background: #f0f0f0; }
.mdi { flex: 1; min-height: 0; display: grid; grid-template: 1fr 1fr / 1fr 1fr; gap: 3px; padding: 2px 3px 2px; background: #5a5c5e; border-top: 1px solid #444; border-right: 2px solid #c4c4c4; }
.win { display: flex; flex-direction: column; min-width: 0; padding: 3px 11px 11px 12px; border: 1px solid #e6eef7; border-radius: 7px 7px 0 0; background: linear-gradient(#bfcddb, #d7e4f2 45px); color: #9aa0a6; }
.win.active { border-color: #cfe2f5 #35c8dc #35c8dc #cfe2f5; background: linear-gradient(#9ab4d2, #b9d1ea 45px); color: #111; }
.win header { display: flex; align-items: center; height: 42px; gap: 5px; padding: 2px 3px 0 0; }
.win header > svg { width: 22px; height: 22px; margin: 0 3px 0 2px; }
.win h3 { flex: 1; }
.win header button { display: grid; place-items: center; width: 46px; height: 26px; border: 1px solid #8496b3; border-radius: 2px; box-shadow: inset 0 0 0 1px #e1ebf6; }
.win header button svg { width: 19px; height: 19px; }
.active header button { background: linear-gradient(#c9d9ec 50%, #9db7d6 50%); border-color: #5f7797; }
.active header .x { background: linear-gradient(#e9a097 48%, #c03c2c 50%, #d88468); border-color: #59202a; box-shadow: inset 0 0 0 1px #eeb9ae; }
.chart { position: relative; flex: 1; min-height: 0; border: 2px solid; border-color: #777 #fff #fff #777; background: #000; }
.plot { height: 100%; overflow: hidden; }
.plot svg { display: block; }
.plot text { font: 14px "DejaVu Sans Condensed", "Noto Sans", sans-serif; fill: #fff; white-space: pre; }
.plot .tagtext { fill: #000; }

.trade { --half: 145px; --head: 69px; position: absolute; left: 8px; top: 30px; display: flex; gap: 3px; padding-right: 3px; padding-bottom: 4px; background: #000; color: #fff; }
.narrow { --half: 140px; --head: 66px; }
.trade > button { width: var(--half); height: 84px; display: flex; flex-direction: column; }
.trade .buy { width: calc(var(--half) - 3px); align-items: flex-end; }
.red > button { background: linear-gradient(#ff5050, #cf1a1c 60%, #a80000); }
.blue > button { background: linear-gradient(#5050ff, #1f1fcc 60%, #0000a8); }
.sell { clip-path: polygon(0 0, var(--head) 0, var(--head) 33px, 100% 33px, 100% 100%, 0 100%); }
.buy { clip-path: polygon(calc(100% - var(--head)) 0, 100% 0, 100% 100%, 0 100%, 0 33px, calc(100% - var(--head)) 33px); }
.trade span { width: calc(var(--head) - 12px); height: 33px; margin: 0 6px; line-height: 31px; text-align: center; border-bottom: 1px solid #ff8080; opacity: .9; }
.blue span { border-color: #8080ff; }
.trade p { display: flex; width: 100%; height: 51px; padding: 0 14px 0 20px; justify-content: flex-end; align-items: baseline; line-height: 51px; gap: 8px; }
.trade small { font-size: 18px; font-weight: 700; }
.trade big { font-size: 43px; line-height: 51px; }
.trade sup { align-self: flex-start; font-size: 18px; line-height: 24px; font-weight: 700; }
.vol { position: absolute; left: calc(var(--head) + 3px); top: 0; width: calc(var(--half) * 2 - var(--head) * 2 - 6px); height: 30px; display: flex; border: 1px solid #b4b4b4; background: #fff; }
.vol button { display: grid; place-items: center; width: 28px; background: #ececec; }
.vol .dn::after, .vol .upb::after { content: ""; border: 4px solid transparent; border-top: 5px solid #000; border-bottom: 0; }
.vol .upb::after { border-top: 0; border-bottom: 5px solid #000; }
.vol input { flex: 1; min-width: 0; border: solid #b4b4b4; border-width: 0 1px; padding-right: 6px; text-align: right; font: inherit; }

.desktabs { margin-top: 2px; height: 28px; padding-left: 9px; }
.desktabs .cur { height: 28px; padding: 0 14px; }
.pager { display: flex; align-items: center; gap: 20px; margin-left: auto; padding-right: 10px; }
.pager i { border: 5px solid transparent; border-right-color: #888; border-left: 0; }
.pager i + i { border-left: 5px solid #888; border-right: 0; }
```
FILE: script.js
```js
// Vertical positions are stored in thirds of a pixel.
const DATES_A = ['24 Dec 2020', '28 Dec 12:00', '29 Dec 20:00', '31 Dec 04:00', '4 Jan 12:00', '5 Jan 20:00', '7 Jan 04:00', '8 Jan 12:00'];
const DATES_B = ['9 Dec 2020', '14 Dec 00:00', '16 Dec 16:00', '21 Dec 08:00', '24 Dec 00:00', '29 Dec 16:00', '4 Jan 08:00', '7 Jan 00:00'];

const charts = {
  eurusd: {
    title: 'EURUSD,H4  1.21608 1.21717 1.21505 1.21529', base: 144, dates: DATES_A,
    grid: [268, 416, 565, 713, 861, 1010, 1158],
    prices: ['1.23370', '1.23055', '1.22740', '1.22420', '1.22105', '1.21790', '1.21470'],
    last: [1132, '1.21529'],
    // high, body top, body bottom, low, filled
    candles: [[838,875,890,905,1],[865,888,952,975,1],[896,950,965,980,1],[922,968,992,1020,1],[985,987,1000,1022,1],[873,888,1002,1010,0],[802,803,890,893,0],[676,682,803,822,0],[678,682,853,953,1],[725,848,885,890,1],[833,844,885,900,0],[748,785,845,882,0],[713,745,787,800,0],[640,676,745,747,0],[622,662,678,733,0],[558,659,718,738,1],[637,676,718,746,0],[430,450,678,738,0],[440,460,515,530,1],[505,515,593,665,1],[440,460,594,597,0],[450,497,497,580,0],[450,497,497,535,0],[440,460,470,480,0],[440,460,480,514,0],[423,492,543,552,1],[496,515,542,634,0],[509,515,795,814,1],[780,794,835,840,1],[648,662,727,782,0],[635,655,664,720,0],[441,475,655,713,0],[415,448,475,508,0],[401,447,664,678,1],[645,665,665,718,0],[612,645,668,713,0],[548,573,647,650,0],[517,573,573,656,0],[486,573,620,629,1],[420,448,620,660,0],[415,450,450,495,0],[324,451,497,535,1],[415,460,493,557,0],[230,262,458,462,0],[212,268,353,370,1],[347,352,448,602,1],[252,321,448,463,0],[234,298,322,346,0],[289,298,385,395,1],[320,384,587,611,1],[544,589,589,701,0],[522,591,605,697,1],[540,586,601,620,0],[571,587,686,750,1],[590,640,686,697,0],[586,641,727,850,1],[508,577,727,758,0],[522,582,776,809,1],[775,780,831,944,1],[788,843,1015,1048,1],[995,996,1015,1072,0],[913,996,1097,1102,1],[1044,1095,1131,1146,1]],
    average: [930,945,950,962,975,970,945,925,915,911,898,882,864,852,838,822,800,763,730,708,687,672,645,610,583,568,552,560,568,569,566,566,559,564,578,588,597,610,618,617,608,588,560,530,512,506,496,470,453,447,448,451,448,465,480,496,508,543,573,612,660,718,772]
  },
  gbpusd: {
    title: 'GBPUSD,H4  1.34925 1.35026 1.34589 1.34640', base: 144, dates: DATES_B,
    grid: [268, 416, 565, 713, 861, 1010, 1158],
    prices: ['1.36665', '1.35765', '1.34865', '1.33965', '1.33065', '1.32165', '1.31265'],
    last: [601, '1.34640'],
    // high, low, close
    bars: [[625,770,632],[580,648,608],[608,782,750],[693,773,728],[693,858,758],[748,777,769],[765,886,845],[820,962,898],[835,932,857],[855,930,898],[845,913,862],[828,867,848],[832,1065,1007],[985,1146,1070],[945,1078,992],[982,1020,1001],[775,893,845],[805,860,835],[688,835,690],[630,719,704],[698,853,817],[805,840,832],[796,868,808],[792,832,797],[793,908,845],[713,868,730],[622,777,659],[590,706,628],[603,652,645],[590,648,605],[508,628,513],[490,548,500],[480,610,592],[522,625,535],[480,562,497],[440,505,470],[440,480,460],[400,480,460],[400,480,460],[400,480,460],[400,480,490],[450,512,500],[470,560,556],[480,558,520],[495,593,533],[450,570,490],[645,768,748],[743,814,764],[760,1015,1006],[828,1056,848],[762,890,780],[549,780,618],[593,705,690],[665,742,727],[620,740,690],[630,773,697],[685,867,780],[743,808,790],[703,808,727],[685,733,705],[635,705,677],[587,705,601],[428,615,568],[513,593,569],[457,570,488],[437,488,452],[365,475,380],[346,455,395],[350,507,485],[472,503,490],[420,495,466],[418,468,420],[418,471,456],[453,584,523],[482,661,623],[603,652,638],[568,652,577],[548,598,568],[506,598,587],[522,590,537],[505,589,560],[525,576,552],[474,556,478],[450,497,469],[410,498,414],[352,426,377],[347,425,380],[334,380,344],[296,385,307],[297,372,339],[262,340,280],[234,333,295],[247,328,295],[274,297,280],[230,314,244],[216,268,240],[208,272,260],[207,355,333],[325,476,434],[410,458,441],[413,445,430],[374,434,385],[356,458,425],[365,450,434],[312,438,326],[321,358,345],[301,382,364],[342,395,354],[280,358,307],[261,437,435],[365,481,371],[333,380,370],[324,385,347],[343,425,406],[333,440,388],[357,453,397],[369,489,465],[415,467,452],[424,480,460],[428,467,442],[373,445,380],[334,423,349],[319,461,410],[412,472,465],[446,535,528],[513,557,542],[518,576,556],[536,611,602]],
    trend: [74,770,92,766,110,756,146,744,180,750,218,766,250,775,272,785,300,812,326,845,344,878,380,891,420,883,460,874,500,862,524,852,545,825,560,795,596,745,630,700,668,677,700,635,722,600,740,565,758,535,775,512,796,495,850,440,905,490,938,540,974,596,1010,637,1046,680,1082,708,1110,735,1140,752,1172,740,1190,712,1226,670,1250,650,1280,612,1326,572,1350,536,1370,506,1388,494,1410,493,1430,497,1470,499,1500,515,1532,533,1570,533,1610,522,1640,505,1660,478,1690,445,1720,415,1760,370,1790,335,1820,312,1840,319,1885,323,1920,336,1970,350,2010,360,2050,383,2075,384,2095,377,2150,376,2185,381,2215,397,2270,400,2305,415,2330,433,2358,452]
  },
  usdchf: {
    title: 'USDCHF,H4  0.88955 0.89199 0.88941 0.89176', base: 138, dates: DATES_B, split: true,
    grid: [217, 365, 513, 662, 810],
    prices: ['0.89130', '0.88740', '0.88340', '0.87950', '0.87560'],
    last: [199, '0.89176'],
    sub: 'MACD(12,26,9) 0.002103 0.001235', subgrid: [[995, '0.00']], edge: ['0.002324', '-0.002545'],
    bars: [[305,375,330],[300,400,300],[210,400,300],...Array(27).fill([300,400,350]),[400,545,530],[430,547,495],[400,494,450],[400,450,450],[400,523,480],[400,502,490],[400,558,550],[450,555,500],[430,533,500],[430,502,500],[400,510,480],[400,450,450],[400,497,450],[400,545,450],[400,450,450],[400,555,450],[300,450,400],[300,400,350],[300,400,350],[195,400,370],[322,443,437],[417,475,440],[390,451,400],[376,427,381],[337,417,381],[372,475,437],[280,460,301],[246,303,301],[273,348,328],[315,366,348],[278,352,292],[220,328,247],[241,390,333],[286,367,362],[355,390,370],[348,383,364],[281,367,310],[238,312,247],[199,263,203],[198,252,235],[228,340,270],[260,300,296],[265,320,315],[193,345,292],[258,357,262],[255,330,325],[295,358,328],[322,390,373],[363,462,437],[346,465,433],[428,530,473],[458,520,517],[485,567,553],[533,590,569],[435,573,463],[448,550,542],[485,578,531],[520,620,606],[575,617,600],[552,620,568],[562,632,596],[570,660,656],[445,662,450],[431,467,437],[475,592,510],[472,525,509],[475,682,654],[629,705,665],[566,690,590],[579,623,608],[579,635,590],[583,650,630],[597,686,642],[602,677,630],[606,735,720],[686,735,712],[660,758,680],[648,725,700],[697,798,767],[673,808,676],[562,680,610],[603,719,718],[690,742,698],[660,710,665],[507,698,522],[473,560,544],[412,563,463],[432,493,490],[373,538,400],[393,450,427],[322,455,420],[403,560,541],[403,550,416],[354,460,442],[310,465,320],[300,333,333],[268,383,280],[187,290,200]],
    histogram: [1140,1132,1113,1105,1096,1092,1087,1091,1095,1100,1105,1108,1097,1082,1064,1055,1043,1037,1052,1060,1062,1064,1065,1062,1057,1055,1055,1056,1057,1058,1068,1063,1062,1058,1055,1058,1063,1062,1061,1062,1060,1052,1047,1042,1038,1045,1035,1025,1000,996,995,995,995,990,985,990,970,962,950,952,948,935,940,942,952,957,950,943,930,921,926,931,935,943,945,953,960,972,995,1000,1020,1037,1055,1073,1073,1078,1082,1097,1105,1105,1106,1113,1090,1072,1065,1055,1075,1082,1084,1080,1078,1078,1080,1085,1087,1095,1095,1100,1105,1100,1082,1085,1080,1073,1047,1028,1000,990,966,947,934,945,930,930,908,898,881,858],
    signal: [72,1146,110,1138,150,1127,185,1113,216,1106,250,1100,300,1097,340,1090,375,1078,410,1064,460,1058,510,1058,560,1062,650,1062,690,1058,740,1063,820,1062,870,1055,920,1043,960,1028,1010,1010,1070,992,1130,972,1180,955,1220,945,1300,942,1340,937,1390,934,1420,932,1450,938,1480,946,1510,963,1535,980,1560,1005,1590,1025,1620,1047,1650,1065,1680,1083,1710,1095,1740,1098,1780,1093,1820,1087,1880,1076,1940,1084,2000,1090,2040,1094,2105,1094,2140,1080,2170,1062,2200,1033,2230,1010,2260,980,2300,950,2350,918]
  },
  usdjpy: {
    title: 'USDJPY,H4  104.105 104.299 104.081 104.296', base: 138, dates: DATES_A, split: true,
    grid: [217, 365, 513, 662, 810],
    prices: ['104.220', '103.810', '103.400', '102.990', '102.580'],
    last: [190, '104.296'],
    sub: 'CCI(14) 141.7401', subgrid: [[918, '100', 1], [990, '0.00'], [1067, '-100', 1]], edge: ['207.4515', '-235.2368'],
    candles: [[437,440,470,480,0],[300,320,400,420,0],[300,320,400,420,0],[300,320,400,420,0],[300,320,400,420,0],[300,320,400,496,0],[300,320,500,514,1],[300,494,494,514,0],[300,491,491,495,0],[300,320,400,420,0],[300,320,400,420,0],[300,320,400,420,0],[300,320,400,420,0],[300,320,400,420,0],[300,320,400,420,0],[300,320,400,493,0],[300,320,400,420,0],[300,400,532,537,1],[515,532,541,563,1],[515,540,577,587,1],[572,572,646,662,1],[531,572,646,672,0],[552,572,607,608,1],[577,612,650,655,0],[585,610,610,632,0],[589,607,658,662,1],[626,634,653,658,0],[545,552,635,658,0],[547,550,570,572,1],[543,631,641,660,1],[629,640,656,686,1],[633,657,752,763,1],[637,650,752,760,0],[566,594,650,658,0],[592,595,627,629,1],[588,612,650,652,0],[604,612,677,680,1],[661,676,716,727,1],[680,688,716,735,0],[673,688,785,803,1],[745,787,787,797,0],[724,738,788,806,0],[706,735,744,762,0],[702,706,735,780,0],[583,595,708,750,0],[499,586,597,604,0],[571,580,650,682,1],[598,606,662,686,0],[566,580,608,627,0],[445,454,582,596,0],[386,433,455,475,0],[310,337,433,458,0],[336,342,388,390,1],[296,338,402,403,0],[327,336,336,380,0],[264,333,366,371,1],[297,365,429,440,1],[268,301,429,433,0],[273,301,326,334,1],[223,235,347,349,0],[217,233,233,262,0],[225,230,262,285,1],[187,190,258,267,0]],
    cci: [956,915,902,896,910,1005,1052,1070,975,860,880,920,957,976,967,1042,1049,1080,1102,1098,1124,1082,1062,1062,1053,1063,1057,1012,985,1030,1083,1148,1080,967,976,977,1030,1084,1066,1103,1098,1070,1040,1025,935,887,955,948,918,870,859,865,888,900,916,924,948,937,932,915,901,914,888]
  }
};

function draw(host) {
  const c = charts[host.dataset.chart];
  const W = host.clientWidth, H = host.clientHeight;
  const right = W - 69, bottom = H - 31, left = 4, top = 3;
  const Y = v => Math.round((v - c.base) / 3);
  const out = [];
  const line = (x1, y1, x2, y2, stroke, extra = '') => out.push(`<path d="M${x1} ${y1}L${x2} ${y2}" stroke="${stroke}" fill="none" ${extra}/>`);
  const text = (x, y, s, cls = '') => out.push(`<text x="${x}" y="${y}" class="${cls}">${s}</text>`);
  const poly = (pts, stroke, extra = '') => out.push(`<polyline points="${pts.join(' ')}" stroke="${stroke}" fill="none" ${extra}/>`);

  for (let x = 53; x < right; x += 48) line(x + .5, top, x + .5, bottom, '#778899', 'stroke-dasharray="5 4" stroke-width="1.4"');
  c.grid.forEach((g, i) => {
    line(left, Y(g) + .5, right, Y(g) + .5, '#778899', 'stroke-dasharray="5 4" stroke-width="1.2"');
    line(right, Y(g) + .5, right + 4, Y(g) + .5, '#fff');
    text(W - 61, Y(g) + 5, c.prices[i]);
  });
  line(left, Y(c.last[0]) + .5, right, Y(c.last[0]) + .5, '#778899', 'stroke-width="1.4"');

  if (c.split) {
    c.subgrid.forEach(([g, label, bright]) => {
      line(left, Y(g) + .5, right, Y(g) + .5, bright ? '#c0c0c0' : '#778899', 'stroke-dasharray="5 4" stroke-width="1.2"');
      line(right, Y(g) + .5, right + 4, Y(g) + .5, '#fff');
      text(W - 64, Y(g) + 5, label);
    });
    text(W - 64, 247, c.edge[0]);
    text(W - 64, bottom - 5, c.edge[1]);
    text(10, 250, c.sub);
  }
  if (c.histogram) c.histogram.forEach((v, i) => line(5.5 + 6 * i, Y(995) + .5, 5.5 + 6 * i, Y(v) + .5, '#b0b0b0', 'stroke-width="1.4"'));
  if (c.candles) c.candles.forEach(([h, a, b, l, full], i) => {
    const x = 5 + 12 * i;
    line(x + .5, Y(h), x + .5, Y(a), '#00d000', 'stroke-width="1.8"');
    line(x + .5, Y(b), x + .5, Y(l), '#00d000', 'stroke-width="1.8"');
    if (a === b) line(x - 3.5, Y(a) + .5, x + 4.5, Y(a) + .5, '#00f000', 'stroke-width="2"');
    else out.push(`<rect x="${x - 2.8}" y="${Y(a) + .7}" width="6.6" height="${Math.max(2, Y(b) - Y(a) - 1)}" fill="${full ? '#fff' : '#000'}" stroke="#00f000" stroke-width="1.6"/>`);
  });
  if (c.bars) {
    let open = c.bars[0][2];
    c.bars.forEach(([h, l, close], i) => {
      const x = 5.5 + 6 * i;
      if (open < h || open > l) open = Math.min(Math.max(open, h), l);
      out.push(`<path d="M${x} ${Y(h)}V${Y(l)}M${x - 2} ${Y(open) + .5}h2M${x} ${Y(close) + .5}h3" stroke="#00f000" stroke-width="1.6"/>`);
      open = close;
    });
  }
  if (c.average) poly(c.average.map((v, i) => `${5.5 + 12 * i},${Y(v) + .5}`), '#ff0000', 'stroke-width="1.4"');
  const pairs = (a, x0) => a.flatMap((v, i) => i % 2 ? [] : [`${(v - x0) / 3},${(a[i + 1] - c.base) / 3}`]);
  if (c.trend) poly(pairs(c.trend, 60), '#ff0000', 'stroke-width="1.4"');
  if (c.signal) poly(pairs(c.signal, 57), '#ff0000', 'stroke-width="1.6" stroke-dasharray="5 4"');
  if (c.cci) poly(c.cci.map((v, i) => `${5.5 + 12 * i},${Y(v) + .5}`), '#20b2aa', 'stroke-width="1.4"');

  const frame = (y1, y2) => out.push(`<rect x="${left - .5}" y="${y1 + .5}" width="${right - left + .5}" height="${y2 - y1}" fill="none" stroke="#fff" stroke-width="1.4"/>`);
  if (c.split) { frame(top, 229); frame(232, bottom); } else frame(top, bottom);
  c.dates.forEach((d, i) => {
    const x = 5 + 96 * i;
    line(x + .5, bottom, x + .5, bottom + 5, '#fff', 'stroke-width="1.4"');
    text(x - 2, bottom + 19, d);
  });
  const ly = Y(c.last[0]);
  out.push(`<rect x="${W - 67}" y="${ly - 8}" width="62" height="17" fill="#fff"/>`);
  text(W - 61, ly + 5, c.last[1], 'tagtext');
  out.push('<path d="M9 20l5-6 5 6z" fill="#fff"/>');
  text(27, 20, c.title);
  host.innerHTML = `<svg width="${W}" height="${H}">${out.join('')}</svg>`;
}

const drawAll = () => document.querySelectorAll('.plot').forEach(draw);
drawAll();
addEventListener('resize', drawAll);
```
